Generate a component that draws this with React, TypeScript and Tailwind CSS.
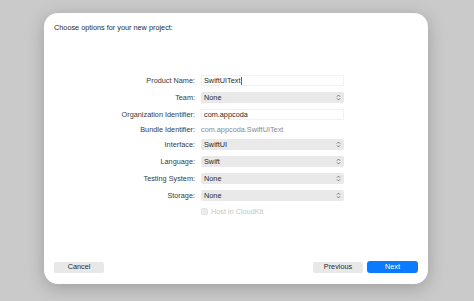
const font = { fontFamily: '"Liberation Sans", Arial, sans-serif' };

const Chevrons = () => (
  <svg width="5" height="7" viewBox="0 0 5 7" className="shrink-0">
    <path d="M1 2.6 L2.5 1.1 L4 2.6 M1 4.4 L2.5 5.9 L4 4.4" fill="none" stroke="#555" strokeWidth="0.8" />
  </svg>
);

const Popup = ({ value }: { value: string }) => (
  <div className="h-[11px] w-[143px] rounded-[2px] bg-[#e9e9e9] flex items-center justify-between pl-[3px] pr-[3px] text-[#2a2a2a]">
    <span>{value}</span>
    <Chevrons />
  </div>
);

const TextField = ({ value, caret }: { value: string; caret?: boolean }) => (
  <div className="h-[11px] w-[143px] bg-white border border-[#f2f2f2] flex items-center pl-[2px] text-[#2a2a2a]">
    <span>{value}</span>
    {caret && <span className="w-[1px] h-[8px] bg-[#1a6cff]" />}
  </div>
);

const Row = ({ label, h, children }: { label: string; h: string; children: React.ReactNode }) => (
  <div className={`flex items-center ${h}`}>
    <div className="w-[75px] text-right text-[#3a3a3a] whitespace-nowrap flex justify-end">{label}</div>
    <div className="ml-[6px]">{children}</div>
  </div>
);

export default function App() {
  return (
    <div className="w-[474px] h-[301px] bg-[#cacaca] overflow-hidden text-[7.3px] leading-[10px]" style={font}>
      <div className="ml-[44px] mt-[13px] w-[384px] h-[271px] bg-white rounded-[14px] shadow-[0_4px_18px_rgba(0,0,0,0.22)] flex flex-col">
        <div className="pl-[10px] pt-[10px] text-[#2a2a2a]">Choose options for your new project:</div>

        <div className="pl-[76px] mt-[39px] flex flex-col">
          <Row label="Product Name:" h="h-[17px]">
            <TextField value="SwiftUIText" caret />
          </Row>
          <Row label="Team:" h="h-[17px]">
            <Popup value="None" />
          </Row>
          <Row label="Organization Identifier:" h="h-[17px]">
            <TextField value="com.appcoda" />
          </Row>
          <Row label="Bundle Identifier:" h="h-[13px]">
            <span className="text-[#8a8a8a]">com.appcoda.SwiftUIText</span>
          </Row>
          <Row label="Interface:" h="h-[17px]">
            <Popup value="SwiftUI" />
          </Row>
          <Row label="Language:" h="h-[17px]">
            <Popup value="Swift" />
          </Row>
          <Row label="Testing System:" h="h-[17px]">
            <Popup value="None" />
          </Row>
          <Row label="Storage:" h="h-[17px]">
            <Popup value="None" />
          </Row>
          <div className="h-[15px] flex items-center ml-[81px] text-[#c4c4c4]">
            <span className="w-[7px] h-[7px] rounded-[2px] bg-[#ededed] border border-[#e2e2e2] mr-[3px]" />
            Host in CloudKit
          </div>
        </div>

        <div className="flex-1" />

        <div className="flex items-center px-[10px] pb-[11px]">
          <button className="w-[50px] h-[11px] rounded-[2px] bg-[#e8e8e8] text-[#2a2a2a] flex items-center justify-center">
            Cancel
          </button>
          <div className="flex-1" />
          <button className="w-[50px] h-[11px] rounded-[2px] bg-[#e8e8e8] text-[#2a2a2a] flex items-center justify-center">
            Previous
          </button>
          <button className="ml-[4px] w-[51px] h-[12px] rounded-[3px] bg-[#0a7aff] text-white flex items-center justify-center">
            Next
          </button>
        </div>
      </div>
    </div>
  );
}
